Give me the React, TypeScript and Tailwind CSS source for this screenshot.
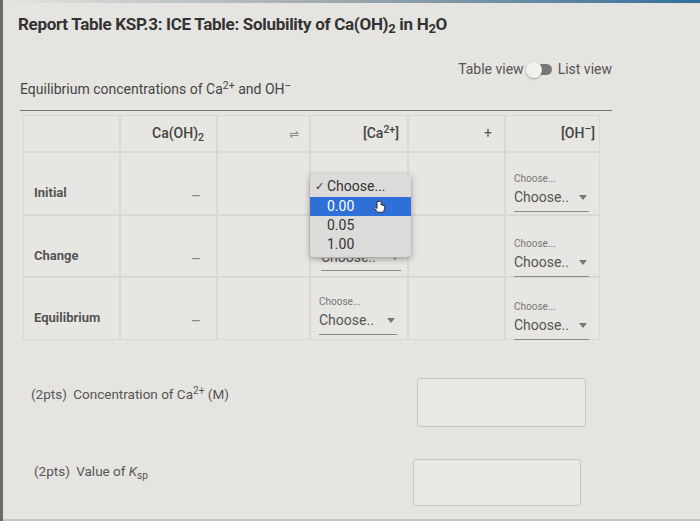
import React from "react";

const cols = ["w-[97px]", "w-[97px]", "w-[93px]", "w-[98px]", "w-[97px]", "w-[95px]"];

function Cell({ col, h, children, className = "" }: { col: number; h: string; children?: React.ReactNode; className?: string }) {
  return (
    <div className={`${cols[col]} ${h} shrink-0 border border-[#dad8d4] bg-[#e8e6e2] ${className}`}>
      {children}
    </div>
  );
}

function Select({ hidden }: { hidden?: boolean }) {
  return (
    <div className={`flex flex-col pl-[8px] pr-[10px] ${hidden ? "invisible" : ""}`}>
      <span className="text-[10px] leading-[12px] text-[#777]">Choose...</span>
      <div className="mt-[4px] flex items-center justify-between border-b border-[#8a8a8a] pb-[5px] text-[14px] leading-[17px] text-[#555]">
        <span>Choose..</span>
        <svg width="8" height="5" viewBox="0 0 8 5" className="mr-[2px]">
          <path d="M0 0h8L4 5z" fill="#777" />
        </svg>
      </div>
    </div>
  );
}

function Dash() {
  return <div className="flex justify-end pr-[15px] pt-[36px] leading-[16px] text-[#888]">–</div>;
}

export default function App() {
  const rowLabel = "pl-[10px] pt-[32px] text-[13px] font-bold leading-[16px] text-[#555]";
  return (
    <div className="relative h-[521px] w-[700px] overflow-hidden border-l-[3px] border-[#6b6a68] bg-[#e6e4e0] font-['Roboto',sans-serif] text-[#444]">
      <div className="h-[3px] w-full bg-gradient-to-r from-[#e6e4e0] via-[#9aa6ad] to-[#2f6f9a]" />
      <h1 className="ml-[15px] mt-[9px] text-[17px] font-bold leading-[24px] tracking-[-0.3px] text-[#333]">
        Report Table KSP.3: ICE Table: Solubility of Ca(OH)<sub className="text-[13px]">2</sub> in H<sub className="text-[13px]">2</sub>O
      </h1>
      <div className="mt-[23px] flex items-center justify-end pr-[88px] text-[14px] text-[#555]">
        <span>Table view</span>
        <span className="relative mx-[2px] inline-flex h-[16px] w-[30px] items-center">
          <span className="absolute left-[10px] h-[11px] w-[16px] rounded-r-full bg-[#777]" />
          <span className="absolute left-0 h-[16px] w-[16px] rounded-full bg-[#f2f1ee] shadow-[0_1px_2px_rgba(0,0,0,0.3)]" />
        </span>
        <span>List view</span>
      </div>
      <div className="ml-[17px] mr-[88px] border-b border-[#777] pb-[12px] text-[14px] leading-[18px] text-[#444]">
        Equilibrium concentrations of Ca<sup>2+</sup> and OH<sup>–</sup>
      </div>

      <div className="ml-[20px] mt-[4px] flex flex-col">
        <div className="flex">
          <Cell col={0} h="h-[37px]" />
          <Cell col={1} h="h-[37px]" className="flex items-center justify-end pr-[12px] text-[14px] font-medium text-[#444]">
            <span>Ca(OH)<sub>2</sub></span>
          </Cell>
          <Cell col={2} h="h-[37px]" className="flex items-center justify-end pr-[10px] text-[12px] text-[#888]">⇌</Cell>
          <Cell col={3} h="h-[37px]" className="flex items-center justify-end pr-[8px] text-[14px] font-medium text-[#444]">
            <span>[Ca<sup>2+</sup>]</span>
          </Cell>
          <Cell col={4} h="h-[37px]" className="flex items-center justify-end pr-[12px] text-[14px] text-[#555]">+</Cell>
          <Cell col={5} h="h-[37px]" className="flex items-center justify-end pr-[4px] text-[14px] font-medium text-[#444]">
            <span>[OH<sup>–</sup>]</span>
          </Cell>
        </div>
        <div className="flex">
          <Cell col={0} h="h-[63px]"><div className={rowLabel}>Initial</div></Cell>
          <Cell col={1} h="h-[63px]"><Dash /></Cell>
          <Cell col={2} h="h-[63px]" />
          <Cell col={3} h="h-[63px]" className="pt-[20px]"><Select hidden /></Cell>
          <Cell col={4} h="h-[63px]" />
          <Cell col={5} h="h-[63px]" className="pt-[20px]"><Select /></Cell>
        </div>
        <div className="flex">
          <Cell col={0} h="h-[62px]"><div className={rowLabel}>Change</div></Cell>
          <Cell col={1} h="h-[62px]"><Dash /></Cell>
          <Cell col={2} h="h-[62px]" />
          <Cell col={3} h="h-[62px]" className="pt-[20px]"><Select hidden /></Cell>
          <Cell col={4} h="h-[62px]" />
          <Cell col={5} h="h-[62px]" className="pt-[22px]"><Select /></Cell>
        </div>
        <div className="flex">
          <Cell col={0} h="h-[63px]"><div className={rowLabel}>Equilibrium</div></Cell>
          <Cell col={1} h="h-[63px]"><Dash /></Cell>
          <Cell col={2} h="h-[63px]" />
          <Cell col={3} h="h-[63px]" className="pt-[18px]"><Select /></Cell>
          <Cell col={4} h="h-[63px]" />
          <Cell col={5} h="h-[63px]" className="pt-[23px]"><Select /></Cell>
        </div>
      </div>

      {/* select under the open popup: only its bottom edge and underline show */}
      <div className="absolute left-[318px] top-[258px] h-[13px] w-[80px] overflow-hidden border-b border-[#8a8a8a]">
        <div className="-mt-[9px] flex items-center justify-between text-[14px] leading-[17px] text-[#555]">
          <span>Choose..</span>
          <svg width="8" height="5" viewBox="0 0 8 5" className="mr-[2px]">
            <path d="M0 0h8L4 5z" fill="#777" />
          </svg>
        </div>
      </div>

      <div className="absolute left-[307px] top-[174px] w-[101px] rounded-[4px] bg-[#dcdbd9] py-[3px] text-[14px] leading-[19px] text-[#333] shadow-[0_2px_6px_rgba(0,0,0,0.35)]">
        <div className="flex items-center pl-[5px]"><span className="w-[12px] text-[11px]">✓</span>Choose...</div>
        <div className="relative mt-[1px] flex items-center bg-[#2f6fd8] pl-[17px] text-white">
          0.00
          <svg width="16" height="16" viewBox="0 0 16 16" className="absolute left-[62px] top-[2px]">
            <path d="M5 2.5v7l-1.5-1.3c-.7-.5-1.6.3-1 1l3 4h6l1.2-4V7c0-.7-1-.8-1.2 0V6.5c0-.7-1-.8-1.2 0V6c0-.7-1-.8-1.2 0V2.5c0-.9-1.5-.9-1.5 0z" fill="#fff" stroke="#222" strokeWidth="0.9" strokeLinejoin="round" />
          </svg>
        </div>
        <div className="pl-[17px]">0.05</div>
        <div className="pl-[17px]">1.00</div>
      </div>

      <div className="mt-[38px] flex items-start">
        <div className="ml-[28px] mt-[8px] w-[386px] text-[13.5px] leading-[16px] text-[#555]">
          <span>(2pts)</span>{" "}
          <span className="ml-[3px]">Concentration of Ca<sup>2+</sup> (M)</span>
        </div>
        <div className="h-[49px] w-[169px] rounded-[3px] border border-[#c8c6c2] bg-[#e9e7e3]" />
      </div>
      <div className="mt-[32px] flex items-start">
        <div className="ml-[31px] mt-[4px] w-[379px] text-[13.5px] leading-[16px] text-[#555]">
          <span>(2pts)</span>{" "}
          <span className="ml-[3px]">Value of <i>K</i><sub>sp</sub></span>
        </div>
        <div className="h-[47px] w-[168px] rounded-[3px] border border-[#c8c6c2] bg-[#e9e7e3]" />
      </div>
      <div className="absolute bottom-0 left-0 h-[2px] w-full bg-[#c9c6c0]" />
    </div>
  );
}
